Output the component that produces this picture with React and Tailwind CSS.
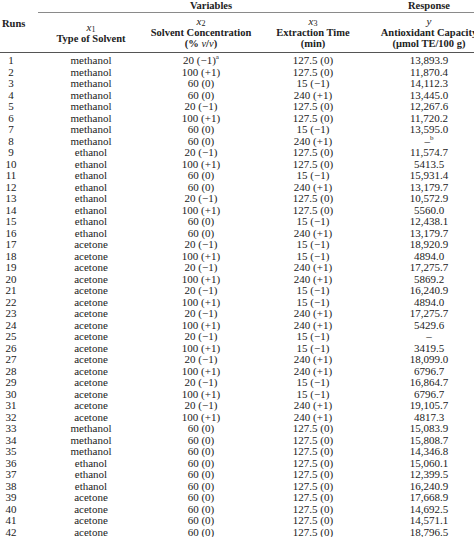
const rows = [
  ["1", "methanol", "20 (−1)", "127.5 (0)", "13,893.9", "a"],
  ["2", "methanol", "100 (+1)", "127.5 (0)", "11,870.4"],
  ["3", "methanol", "60 (0)", "15 (−1)", "14,112.3"],
  ["4", "methanol", "60 (0)", "240 (+1)", "13,445.0"],
  ["5", "methanol", "20 (−1)", "127.5 (0)", "12,267.6"],
  ["6", "methanol", "100 (+1)", "127.5 (0)", "11,720.2"],
  ["7", "methanol", "60 (0)", "15 (−1)", "13,595.0"],
  ["8", "methanol", "60 (0)", "240 (+1)", "–", null, "b"],
  ["9", "ethanol", "20 (−1)", "127.5 (0)", "11,574.7"],
  ["10", "ethanol", "100 (+1)", "127.5 (0)", "5413.5"],
  ["11", "ethanol", "60 (0)", "15 (−1)", "15,931.4"],
  ["12", "ethanol", "60 (0)", "240 (+1)", "13,179.7"],
  ["13", "ethanol", "20 (−1)", "127.5 (0)", "10,572.9"],
  ["14", "ethanol", "100 (+1)", "127.5 (0)", "5560.0"],
  ["15", "ethanol", "60 (0)", "15 (−1)", "12,438.1"],
  ["16", "ethanol", "60 (0)", "240 (+1)", "13,179.7"],
  ["17", "acetone", "20 (−1)", "15 (−1)", "18,920.9"],
  ["18", "acetone", "100 (+1)", "15 (−1)", "4894.0"],
  ["19", "acetone", "20 (−1)", "240 (+1)", "17,275.7"],
  ["20", "acetone", "100 (+1)", "240 (+1)", "5869.2"],
  ["21", "acetone", "20 (−1)", "15 (−1)", "16,240.9"],
  ["22", "acetone", "100 (+1)", "15 (−1)", "4894.0"],
  ["23", "acetone", "20 (−1)", "240 (+1)", "17,275.7"],
  ["24", "acetone", "100 (+1)", "240 (+1)", "5429.6"],
  ["25", "acetone", "20 (−1)", "15 (−1)", "–"],
  ["26", "acetone", "100 (+1)", "15 (−1)", "3419.5"],
  ["27", "acetone", "20 (−1)", "240 (+1)", "18,099.0"],
  ["28", "acetone", "100 (+1)", "240 (+1)", "6796.7"],
  ["29", "acetone", "20 (−1)", "15 (−1)", "16,864.7"],
  ["30", "acetone", "100 (+1)", "15 (−1)", "6796.7"],
  ["31", "acetone", "20 (−1)", "240 (+1)", "19,105.7"],
  ["32", "acetone", "100 (+1)", "240 (+1)", "4817.3"],
  ["33", "methanol", "60 (0)", "127.5 (0)", "15,083.9"],
  ["34", "methanol", "60 (0)", "127.5 (0)", "15,808.7"],
  ["35", "methanol", "60 (0)", "127.5 (0)", "14,346.8"],
  ["36", "ethanol", "60 (0)", "127.5 (0)", "15,060.1"],
  ["37", "ethanol", "60 (0)", "127.5 (0)", "12,399.5"],
  ["38", "ethanol", "60 (0)", "127.5 (0)", "16,240.9"],
  ["39", "acetone", "60 (0)", "127.5 (0)", "17,668.9"],
  ["40", "acetone", "60 (0)", "127.5 (0)", "14,692.5"],
  ["41", "acetone", "60 (0)", "127.5 (0)", "14,571.1"],
  ["42", "acetone", "60 (0)", "127.5 (0)", "18,796.5"],
];

const cols = "grid grid-cols-[22px_138px_82px_142px_90px]";
const cell = "flex justify-center whitespace-nowrap";

function Sym({ v, n }) {
  return (
    <span className="flex h-[11px] items-start font-normal italic text-[11px] leading-[10px]">
      {v}
      {n && <span className="text-[8px] not-italic leading-none pt-[4px]">{n}</span>}
    </span>
  );
}

export default function App() {
  return (
    <div
      className="w-[474px] h-[537px] overflow-hidden bg-white text-[#222] text-[11px]"
      style={{ fontFamily: '"Liberation Serif", "Times New Roman", serif' }}
    >
      <div className="font-bold text-[10.5px]">
        <div className={cols + " h-[13px] leading-[11px]"}>
          <div />
          <div className="col-span-3 flex justify-center border-b border-[#8a8a8a] ml-[16px]">
            Variables
          </div>
          <div className="flex justify-center border-b border-[#8a8a8a]">Response</div>
        </div>
        <div className={cols + " border-b border-[#555] pt-[3px] pb-[3px] leading-[11px]"}>
          <div className="flex items-center justify-start pl-[2px] pb-[18px]">Runs</div>
          <div className="flex flex-col items-center justify-center">
            <Sym v="x" n="1" />
            <span>Type of Solvent</span>
          </div>
          <div className="flex flex-col items-center whitespace-nowrap">
            <Sym v="x" n="2" />
            <span>Solvent Concentration</span>
            <span>
              (% <i className="font-normal">v</i>/<i className="font-normal">v</i>)
            </span>
          </div>
          <div className="flex flex-col items-center whitespace-nowrap">
            <Sym v="x" n="3" />
            <span>Extraction Time</span>
            <span>(min)</span>
          </div>
          <div className="flex flex-col items-center whitespace-nowrap">
            <Sym v="y" />
            <span>Antioxidant Capacity</span>
            <span>(μmol TE/100 g)</span>
          </div>
        </div>
      </div>
      <div className="pt-[2px]">
        {rows.map((r) => (
          <div key={r[0]} className={cols + " h-[11.5px] leading-[11.5px]"}>
            <div className={cell}>{r[0]}</div>
            <div className={cell}>{r[1]}</div>
            <div className={cell}>
              {r[2]}
              {r[5] && <span className="text-[7px] leading-[7px] relative -top-[1px]">{r[5]}</span>}
            </div>
            <div className={cell}>{r[3]}</div>
            <div className={cell}>
              {r[4]}
              {r[6] && <span className="text-[7px] leading-[7px] relative -top-[1px]">{r[6]}</span>}
            </div>
          </div>
        ))}
      </div>
    </div>
  );
}
